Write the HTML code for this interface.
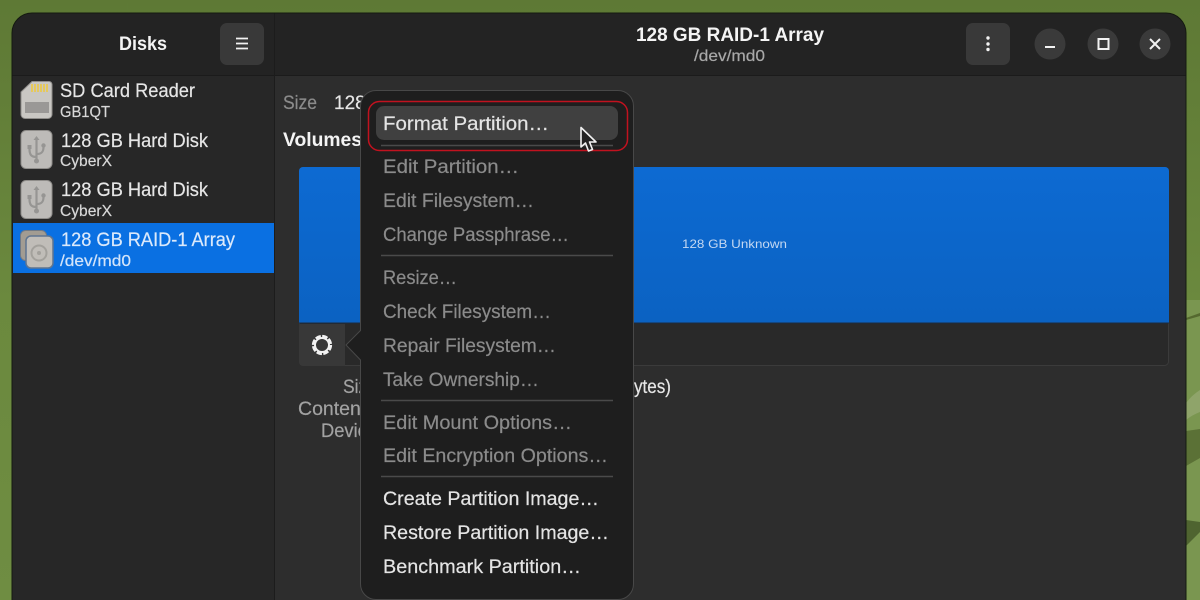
<!DOCTYPE html>
<html><head><meta charset="utf-8"><title>Disks</title>
<style>
html,body{margin:0;padding:0;width:1200px;height:600px;overflow:hidden;background:#6a873c}
svg{display:block;filter:blur(.35px)}
text{font-family:"Liberation Sans",sans-serif;font-size:19px;fill:#e6e6e6;stroke:#e6e6e6;stroke-width:.2px}
.b{font-weight:700;fill:#f4f4f4;stroke:none}
.s{font-size:16px;fill:#d8d8d8;stroke:#d8d8d8}
.d{fill:#8b8b8b;stroke:#8b8b8b}
.g{fill:#a2a2a2;stroke:#a2a2a2}
.m{fill:#e4e4e4;stroke:#e4e4e4}
</style></head><body>
<svg width="1200" height="600" viewBox="0 0 1200 600" xmlns="http://www.w3.org/2000/svg">
<defs>
<linearGradient id="bg" x1="0" y1="0" x2="0" y2="1"><stop offset="0" stop-color="#5e7935"/><stop offset=".5" stop-color="#6b893e"/><stop offset="1" stop-color="#6f8d42"/></linearGradient>
<linearGradient id="blue" x1="0" y1="0" x2="0" y2="1"><stop offset="0" stop-color="#0d6ad2"/><stop offset="1" stop-color="#0b62c2"/></linearGradient>
<clipPath id="win"><path d="M12 600V33a20 20 0 0 1 20-20H1166a20 20 0 0 1 20 20V600Z"/></clipPath>
<g id="usb">
<rect x="21" y="0.500" width="31" height="38" rx="5" fill="#bdbbb8" stroke="#8f8d8a"/>
<path d="M36.500 8V31M36.500 27c-5 0-7-2-7-8M36.500 24c5 0 7-2 7-7" fill="none" stroke="#969593" stroke-width="2.200"/>
<path d="M36.500 6l-3 4h6zM27.500 15h4v4h-4z" fill="#969593"/><circle cx="43.500" cy="15.500" r="2.200" fill="#969593"/><circle cx="36.500" cy="31" r="2.500" fill="#969593"/>
</g>
</defs>
<!-- wallpaper -->
<rect width="1200" height="600" fill="url(#bg)"/>
<rect x="1186" y="300" width="14" height="300" fill="#7a9650"/>
<path d="M1186 318l14-5v3l-14 4z" fill="#55692f"/>
<path d="M1186 403q6-8 14-13v22q-8 3-14 8z" fill="#8fa46a"/>
<path d="M1186 431l14-2v29l-14 8z" fill="#5b7136"/>
<path d="M1186 520l14 2v10l-14 14z" fill="#4f6430"/>
<!-- window -->
<g clip-path="url(#win)">
<rect x="12" y="13" width="1174" height="587" fill="#2d2d2d"/>
<rect x="12" y="13" width="1174" height="62" fill="#232323"/>
<rect x="12" y="75" width="1174" height="1" fill="#1b1b1b"/>
<rect x="12" y="76" width="262" height="524" fill="#272727"/>
<rect x="274" y="13" width="1" height="587" fill="#1c1c1c"/>
<rect x="13" y="223" width="261" height="50" fill="#0a70e2"/>
</g>
<path d="M12 600V33a20 20 0 0 1 20-20H1166a20 20 0 0 1 20 20V600" fill="none" stroke="#141a10" stroke-width="1"/>
<!-- header -->
<text class="b" x="119" y="50" textLength="48" lengthAdjust="spacingAndGlyphs">Disks</text>
<rect x="220" y="23" width="44" height="42" rx="7" fill="#393939"/>
<path d="M236 38.500h12M236 43.500h12M236 48.500h12" stroke="#f2f2f2" stroke-width="1.800"/>
<text class="b" x="636" y="41" textLength="188" lengthAdjust="spacingAndGlyphs">128 GB RAID-1 Array</text>
<text class="s" x="694" y="61" textLength="71" lengthAdjust="spacingAndGlyphs" style="fill:#a8a8a8;stroke:#a8a8a8">/dev/md0</text>
<rect x="966" y="23" width="44" height="42" rx="7" fill="#393939"/>
<circle cx="988" cy="38" r="1.700" fill="#f2f2f2"/><circle cx="988" cy="44" r="1.700" fill="#f2f2f2"/><circle cx="988" cy="49.500" r="1.700" fill="#f2f2f2"/>
<circle cx="1050" cy="44" r="15.500" fill="#3a3a3a"/><path d="M1045 47h10" stroke="#f2f2f2" stroke-width="2"/>
<circle cx="1103" cy="44" r="15.500" fill="#3a3a3a"/><rect x="1098.500" y="39" width="10" height="10" fill="none" stroke="#f2f2f2" stroke-width="2"/>
<circle cx="1155" cy="44" r="15.500" fill="#3a3a3a"/><path d="M1150 39l10 10M1160 39l-10 10" stroke="#f2f2f2" stroke-width="2"/>
<!-- sidebar icons -->
<path d="M32 81.500h17a3 3 0 0 1 3 3v30a4 4 0 0 1-4 4H25a4 4 0 0 1-4-4V92z" fill="#c9c7c3" stroke="#8f8d8a"/>
<path d="M32 84v8M35 84v8M38 84v8M41 84v8M44 84v8M47 84v8" stroke="#e6c95c" stroke-width="2"/>
<rect x="25" y="102" width="24" height="11" fill="#9a9896"/>
<use href="#usb" y="130"/>
<use href="#usb" y="180"/>
<rect x="20.500" y="230.500" width="26" height="30" rx="5" fill="#a29c92" stroke="#6f7a88"/>
<rect x="26" y="236" width="27" height="32" rx="5" fill="#c0bdb8" stroke="#5f7590" stroke-width="1.500"/>
<circle cx="39" cy="253" r="7.500" fill="none" stroke="#a3a19c" stroke-width="2"/><circle cx="39" cy="253" r="2" fill="#a3a19c"/>
<!-- sidebar text -->
<text x="60" y="97" textLength="135" lengthAdjust="spacingAndGlyphs">SD Card Reader</text>
<text class="s" x="60" y="117" textLength="50" lengthAdjust="spacingAndGlyphs">GB1QT</text>
<text x="61" y="147" textLength="147" lengthAdjust="spacingAndGlyphs">128 GB Hard Disk</text>
<text class="s" x="60" y="166" textLength="52" lengthAdjust="spacingAndGlyphs">CyberX</text>
<text x="61" y="196" textLength="147" lengthAdjust="spacingAndGlyphs">128 GB Hard Disk</text>
<text class="s" x="60" y="216" textLength="52" lengthAdjust="spacingAndGlyphs">CyberX</text>
<text x="61" y="246" textLength="174" lengthAdjust="spacingAndGlyphs" style="fill:#dbe9fb;stroke:#dbe9fb">128 GB RAID-1 Array</text>
<text class="s" x="60" y="266" textLength="71" lengthAdjust="spacingAndGlyphs" style="fill:#d3e4fa;stroke:#d3e4fa">/dev/md0</text>
<!-- content -->
<text class="d" x="283" y="109" textLength="34" lengthAdjust="spacingAndGlyphs">Size</text>
<text x="334" y="109">128 GB</text>
<text class="b" x="283" y="146" textLength="79" lengthAdjust="spacingAndGlyphs">Volumes</text>
<rect x="299.500" y="167.500" width="869" height="198" rx="4" fill="#292929" stroke="#3b3b3b"/>
<path d="M299 171a4 4 0 0 1 4-4H1165a4 4 0 0 1 4 4V323H299z" fill="url(#blue)"/>
<path d="M299 323h870" stroke="#1c2c40"/>
<text x="682" y="248" textLength="105" lengthAdjust="spacingAndGlyphs" style="font-size:12px;fill:#c4d8f2;stroke:none">128 GB Unknown</text>
<path d="M299 324h46v42h-42a4 4 0 0 1-4-4z" fill="#383838"/>
<circle cx="322" cy="345" r="8.800" fill="none" stroke="#f2f2f2" stroke-width="2.600" stroke-dasharray="5.500 1.400"/>
<circle cx="322" cy="345" r="7" fill="none" stroke="#f2f2f2" stroke-width="2"/>
<text class="g" x="343" y="393" textLength="34" lengthAdjust="spacingAndGlyphs">Size</text>
<text class="g" x="298" y="415" textLength="78" lengthAdjust="spacingAndGlyphs">Contents</text>
<text class="g" x="321" y="437" textLength="56" lengthAdjust="spacingAndGlyphs">Device</text>
<text x="634" y="393" textLength="37" lengthAdjust="spacingAndGlyphs">ytes)</text>
<!-- popover -->
<path d="M376 90.500H618a15.500 15.500 0 0 1 15.500 15.500V584a15.500 15.500 0 0 1-15.500 15.500H376a15.500 15.500 0 0 1-15.500-15.500V360L346 345l14.500-14.500V106a15.500 15.500 0 0 1 15.500-15.500Z" fill="#1e1e1e" stroke="#484848"/>
<rect x="376" y="106" width="242" height="34" rx="8" fill="#404040"/>
<path d="M381 145.500H613M381 255.500H613M381 400.500H613M381 476.500H613" stroke="#4a4a4a" stroke-width="1.500"/>
<rect x="368.500" y="101.500" width="259" height="49" rx="11" fill="none" stroke="#c1121f" stroke-width="1.500"/>
<text x="383" y="130" textLength="166" lengthAdjust="spacingAndGlyphs" class="m">Format Partition…</text>
<text class="d" x="383" y="173" textLength="136" lengthAdjust="spacingAndGlyphs">Edit Partition…</text>
<text class="d" x="383" y="207" textLength="151" lengthAdjust="spacingAndGlyphs">Edit Filesystem…</text>
<text class="d" x="383" y="241" textLength="186" lengthAdjust="spacingAndGlyphs">Change Passphrase…</text>
<text class="d" x="383" y="284" textLength="74" lengthAdjust="spacingAndGlyphs">Resize…</text>
<text class="d" x="383" y="318" textLength="168" lengthAdjust="spacingAndGlyphs">Check Filesystem…</text>
<text class="d" x="383" y="352" textLength="173" lengthAdjust="spacingAndGlyphs">Repair Filesystem…</text>
<text class="d" x="383" y="386" textLength="156" lengthAdjust="spacingAndGlyphs">Take Ownership…</text>
<text class="d" x="383" y="429" textLength="189" lengthAdjust="spacingAndGlyphs">Edit Mount Options…</text>
<text class="d" x="383" y="462" textLength="225" lengthAdjust="spacingAndGlyphs">Edit Encryption Options…</text>
<text class="m" x="383" y="505" textLength="216" lengthAdjust="spacingAndGlyphs">Create Partition Image…</text>
<text class="m" x="383" y="539" textLength="226" lengthAdjust="spacingAndGlyphs">Restore Partition Image…</text>
<text class="m" x="383" y="573" textLength="198" lengthAdjust="spacingAndGlyphs">Benchmark Partition…</text>
<!-- cursor -->
<path d="M581 127.500V147l4.500-4 3 8 4-1.500-3-7.500h6.500z" fill="#222" stroke="#f2f2f2" stroke-width="1.600" stroke-linejoin="round"/>
</svg>
</body></html>
